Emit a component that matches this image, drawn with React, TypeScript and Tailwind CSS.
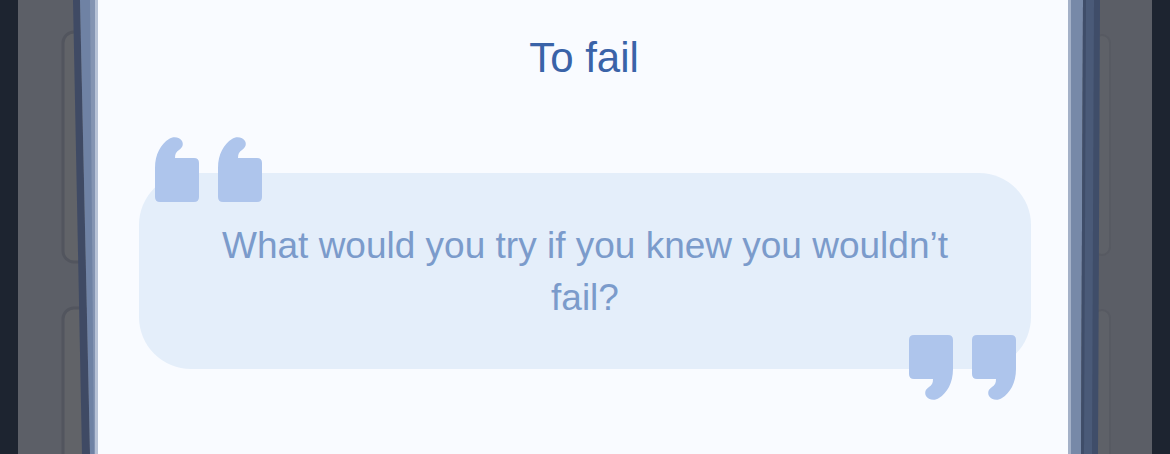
import React from 'react';

// Phone-frame edge on the left: gray case, side buttons, slanted bezel
function LeftFrame() {
  return (
    <svg width="80" height="454" viewBox="0 0 80 454" className="block shrink-0">
      <rect x="0" y="0" width="80" height="454" fill="#5c5f67" />
      <rect x="45" y="32" width="30" height="230" rx="11" fill="#616368" stroke="#52555e" strokeWidth="3" />
      <rect x="45" y="308" width="30" height="200" rx="11" fill="#616368" stroke="#52555e" strokeWidth="3" />
      <polygon points="55,0 62,0 72,454 64,454" fill="#3f4a64" />
      <polygon points="62,0 80,0 80,454 72,454" fill="#6f82a4" />
      <polygon points="72,0 80,0 80,454 76,454" fill="#8494b2" />
      <rect x="77" y="0" width="3" height="454" fill="#b7c2d6" />
    </svg>
  );
}

function RightFrame() {
  return (
    <svg width="84" height="454" viewBox="0 0 84 454" className="block shrink-0">
      <rect x="0" y="0" width="84" height="454" fill="#5b5e66" />
      <rect x="26" y="35" width="16" height="220" rx="8" fill="#5e6168" stroke="#575a62" strokeWidth="2" />
      <rect x="26" y="310" width="16" height="200" rx="8" fill="#5e6168" stroke="#575a62" strokeWidth="2" />
      <polygon points="0,0 15,0 13,454 0,454" fill="#7789a8" />
      <polygon points="15,0 32,0 30,454 13,454" fill="#3f4d69" />
      <polygon points="18,0 26,0 24,454 16,454" fill="#4a5a78" />
      <rect x="0" y="0" width="3" height="454" fill="#a4b1c8" />
    </svg>
  );
}

// Solid open-quote glyph: rounded block with a fat curled tail
function QuoteMark() {
  return (
    <svg width="45" height="68" viewBox="0 0 45 68" className="block">
      <path
        d="M5 67 Q0 67 0 62 L0 33 C0 19 6 9 14 4 C18 1 25 2 27 6 C29 10 27 13 24 15 C21 17 20 19 20 23 L39 23 Q44 23 44 28 L44 62 Q44 67 39 67 Z"
        fill="#aec5ec"
      />
    </svg>
  );
}

export default function App() {
  return (
    <div className="w-[1170px] h-[454px] flex bg-[#1d2430] overflow-hidden font-['Liberation_Sans',Arial,sans-serif]">
      <div className="w-[18px] shrink-0" />
      <LeftFrame />

      <main className="flex-1 bg-[#f9fbff] flex flex-col">
        <h1 className="pt-[34px] text-center text-[42px] leading-[48px] text-[#3a63a8] pl-[2px]">To fail</h1>

        <div className="relative mt-[91px] ml-[41px] w-[892px] rounded-[52px] bg-[#e4eefa] px-16 pt-[47px] pb-[45px]">
          <div className="absolute left-[16px] -top-[38px] flex gap-[18px]">
            <QuoteMark />
            <QuoteMark />
          </div>

          <p className="text-center text-[37px] leading-[52px] text-[#7b9bcb]">
            What would you try if you knew you wouldn’t fail?
          </p>

          <div className="absolute right-[15px] -bottom-[33px] flex gap-[18px] rotate-180">
            <QuoteMark />
            <QuoteMark />
          </div>
        </div>
      </main>

      <RightFrame />
      <div className="w-[18px] shrink-0" />
    </div>
  );
}
